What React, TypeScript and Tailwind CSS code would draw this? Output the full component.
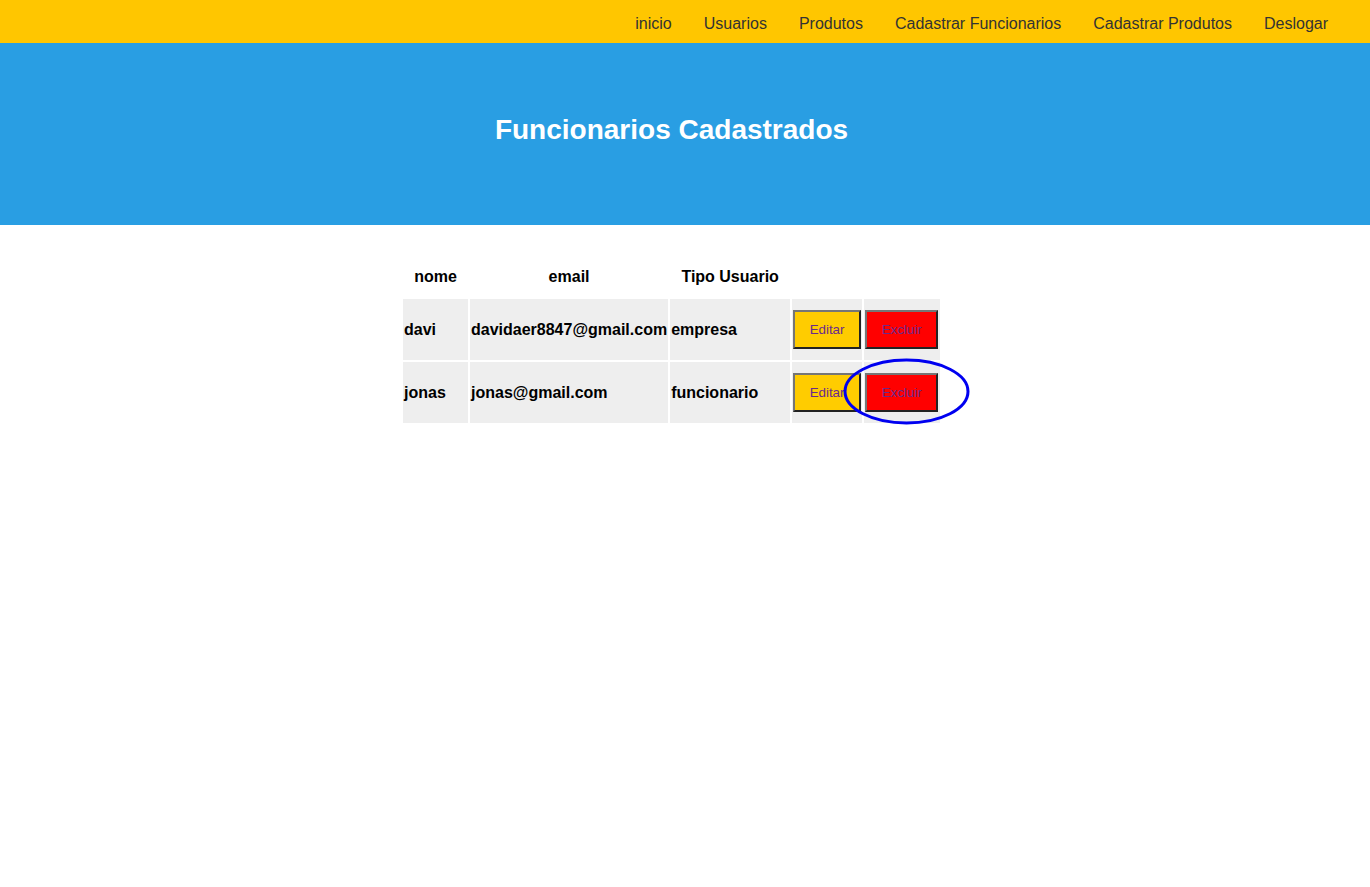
const funcionarios = [
  { nome: 'davi', email: 'davidaer8847@gmail.com', tipo: 'empresa' },
  { nome: 'jonas', email: 'jonas@gmail.com', tipo: 'funcionario' },
];

const links = ['inicio', 'Usuarios', 'Produtos', 'Cadastrar Funcionarios', 'Cadastrar Produtos', 'Deslogar'];

const btn =
  'my-[10px] border-2 border-t-[#767676] border-l-[#767676] border-b-[#222] border-r-[#222] px-[14.5px] py-[10px] text-[13.33px] leading-[15px] text-[#6a2a8e]';

export default function App() {
  return (
    <div className="relative min-h-[887px] bg-white font-['Liberation_Sans',Arial,sans-serif]">
      {/* Top nav */}
      <nav className="flex h-[43px] items-center justify-end gap-8 bg-[#ffc600] pt-[4px] pr-[42px]">
        {links.map((l) => (
          <a key={l} className="text-[16px] text-[#333]">
            {l}
          </a>
        ))}
      </nav>

      {/* Banner */}
      <header className="flex h-[182px] items-center justify-center bg-[#299ee3] pr-[27px] pb-[8px]">
        <h1 className="text-[28px] font-bold text-white">Funcionarios Cadastrados</h1>
      </header>

      {/* Table */}
      <div className="mt-[28px] ml-[401px]">
        <table className="border-separate border-spacing-[2px] text-[16px] font-bold text-black">
          <thead>
            <tr>
              <th className="w-[65px] px-[10px] pt-[10px] pb-[8px] text-center">nome</th>
              <th className="w-[198px] px-[10px] pt-[10px] pb-[8px] text-center">email</th>
              <th className="w-[120px] px-[10px] pt-[10px] pb-[8px] text-center">Tipo Usuario</th>
              <th className="w-[70px] px-[10px] pt-[10px] pb-[8px]"></th>
              <th className="w-[76px] px-[10px] pt-[10px] pb-[8px]"></th>
            </tr>
          </thead>
          <tbody>
            {funcionarios.map((f) => (
              <tr key={f.email}>
                <td className="bg-[#eeeeee] p-px text-left">{f.nome}</td>
                <td className="bg-[#eeeeee] p-px text-left whitespace-nowrap">{f.email}</td>
                <td className="bg-[#eeeeee] p-px text-left">{f.tipo}</td>
                <td className="bg-[#eeeeee] p-px">
                  <button className={`${btn} bg-[#ffcc00] font-normal`}>Editar</button>
                </td>
                <td className="bg-[#eeeeee] p-px">
                  <button className={`${btn} bg-[#ff0000] font-normal`}>Excluir</button>
                </td>
              </tr>
            ))}
          </tbody>
        </table>
      </div>

      {/* annotation circle */}
      <svg className="absolute left-[843px] top-[358px]" width="128" height="68" viewBox="0 0 128 68">
        <ellipse cx="63.5" cy="33.5" rx="61.5" ry="31.5" fill="none" stroke="#0000f0" strokeWidth="3" />
      </svg>
    </div>
  );
}
